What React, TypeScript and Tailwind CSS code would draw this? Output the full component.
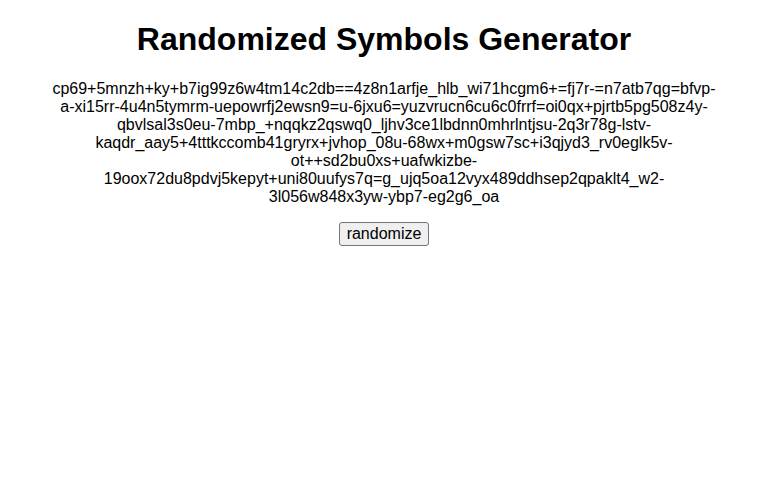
import { useState } from 'react'

const initialSymbols =
  'cp69+5mnzh+ky+b7ig99z6w4tm14c2db==4z8n1arfje_hlb_wi71hcgm6+=fj7r-=n7atb7qg=bfvp-a-xi15rr-4u4n5tymrm-uepowrfj2ewsn9=u-6jxu6=yuzvrucn6cu6c0frrf=oi0qx+pjrtb5pg508z4y-qbvlsal3s0eu-7mbp_+nqqkz2qswq0_ljhv3ce1lbdnn0mhrlntjsu-2q3r78g-lstv-kaqdr_aay5+4tttkccomb41gryrx+jvhop_08u-68wx+m0gsw7sc+i3qjyd3_rv0eglk5v-ot++sd2bu0xs+uafwkizbe-19oox72du8pdvj5kepyt+uni80uufys7q=g_ujq5oa12vyx489ddhsep2qpaklt4_w2-3l056w848x3yw-ybp7-eg2g6_oa'

const alphabet = 'abcdefghijklmnopqrstuvwxyz0123456789+-=_'

function randomSymbols(length: number) {
  let out = ''
  for (let i = 0; i < length; i++) {
    out += alphabet[Math.floor(Math.random() * alphabet.length)]
  }
  return out
}

export default function App() {
  const [symbols, setSymbols] = useState(initialSymbols)

  return (
    <div className="min-h-screen bg-white text-black text-center font-['Liberation_Sans',Arial,sans-serif]">
      <h1 className="pt-[21px] pb-[22px] text-[32px] leading-[37px] font-bold">
        Randomized Symbols Generator
      </h1>
      <div className="mx-auto w-[672px] text-base leading-[18px] break-words">
        {symbols}
      </div>
      <button
        type="button"
        onClick={() => setSymbols(randomSymbols(initialSymbols.length))}
        className="mt-[16px] rounded-[3px] border border-[#767676] bg-[#efefef] px-[7px] py-[2px] text-base leading-[18px] text-black hover:bg-[#e5e5e5]"
      >
        randomize
      </button>
    </div>
  )
}
